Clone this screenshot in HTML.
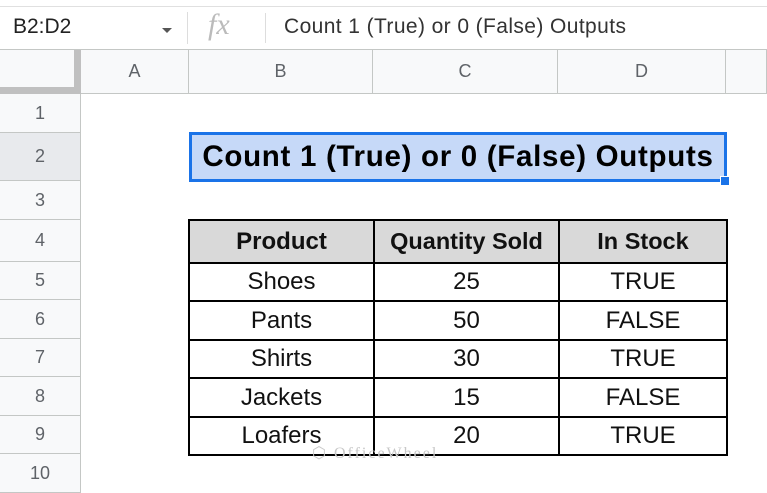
<!DOCTYPE html>
<html><head><style>
body{margin:0;width:767px;height:493px;overflow:hidden;background:#fff;font-family:"Liberation Sans",Arial,sans-serif;position:relative}
.a{position:absolute;box-sizing:border-box}
.rh{left:0;width:81px;background:#f8f9fa;border-bottom:1px solid #c4c7c5;border-right:1px solid #c4c7c5;text-align:center;color:#5f6368;font-size:18px;display:flex;align-items:center;justify-content:center}
.ch{top:50px;height:44px;background:#f8f9fa;border-right:1px solid #c4c7c5;border-bottom:1px solid #c4c7c5;color:#5f6368;font-size:18px;display:flex;align-items:center;justify-content:center}
.c{border-right:2px solid #000;border-bottom:2px solid #000;display:flex;align-items:center;justify-content:center;font-size:24px;color:#111}
.h{font-weight:bold;font-size:23.5px}
</style></head><body>
<div class="a" style="left:0;top:6px;width:767px;height:1px;background:#e0e0e0"></div>
<div class="a" style="left:0;top:7px;width:767px;height:43px;background:#fff;border-bottom:1px solid #c4c7c5"></div>
<div class="a" style="left:13px;top:15px;font-size:21px;color:#222">B2:D2</div>
<div class="a" style="left:162px;top:28px;width:0;height:0;border-left:5px solid transparent;border-right:5px solid transparent;border-top:5px solid #555"></div>
<div class="a" style="left:187px;top:12px;width:1px;height:32px;background:#ddd"></div>
<div class="a" style="left:208px;top:8px;font-size:30px;font-style:italic;color:#bbb;font-family:'Liberation Serif',serif">fx</div>
<div class="a" style="left:265px;top:13px;width:1px;height:30px;background:#ddd"></div>
<div class="a" style="left:284px;top:15px;font-size:21px;letter-spacing:0.4px;color:#333">Count 1 (True) or 0 (False) Outputs</div>

<div class="a" style="left:0;top:50px;width:81px;height:44px;background:#f8f9fa;border-right:7px solid #c0c0c0;border-bottom:7px solid #c0c0c0"></div>
<div class="a ch" style="left:81px;width:108px">A</div>
<div class="a ch" style="left:189px;width:184px">B</div>
<div class="a ch" style="left:373px;width:185px">C</div>
<div class="a ch" style="left:558px;width:168px">D</div>
<div class="a ch" style="left:726px;width:41px"></div>

<div class="a rh" style="top:94px;height:39px">1</div>
<div class="a rh" style="top:133px;height:48px;background:#e8eaed">2</div>
<div class="a rh" style="top:181px;height:39px">3</div>
<div class="a rh" style="top:220px;height:42px">4</div>
<div class="a rh" style="top:262px;height:38px">5</div>
<div class="a rh" style="top:300px;height:39px">6</div>
<div class="a rh" style="top:339px;height:38px">7</div>
<div class="a rh" style="top:377px;height:39px">8</div>
<div class="a rh" style="top:416px;height:38px">9</div>
<div class="a rh" style="top:454px;height:39px">10</div>

<div class="a" style="left:189px;top:132px;width:538px;height:50px;background:#c6d9f8;border:3px solid #1a73e8;display:flex;align-items:center;justify-content:center;font-size:29.5px;letter-spacing:0.7px;font-weight:bold;color:#000;white-space:nowrap">Count 1 (True) or 0 (False) Outputs</div>
<div class="a" style="left:720px;top:176px;width:10px;height:10px;background:#1a73e8;border:1px solid #fff"></div>

<div class="a" style="left:188px;top:219px;width:540px;height:237px;border-left:2px solid #000;border-top:2px solid #000"></div>
<div class="a c h" style="left:190px;top:221px;width:185px;height:43px;background:#d9d9d9;font-size:24px">Product</div>
<div class="a c h" style="left:375px;top:221px;width:185px;height:43px;background:#d9d9d9">Quantity Sold</div>
<div class="a c h" style="left:560px;top:221px;width:168px;height:43px;background:#d9d9d9">In Stock</div>

<div class="a c" style="left:190px;top:264px;width:185px;height:38px">Shoes</div>
<div class="a c" style="left:375px;top:264px;width:185px;height:38px">25</div>
<div class="a c" style="left:560px;top:264px;width:168px;height:38px">TRUE</div>
<div class="a c" style="left:190px;top:302px;width:185px;height:39px">Pants</div>
<div class="a c" style="left:375px;top:302px;width:185px;height:39px">50</div>
<div class="a c" style="left:560px;top:302px;width:168px;height:39px">FALSE</div>
<div class="a c" style="left:190px;top:341px;width:185px;height:38px">Shirts</div>
<div class="a c" style="left:375px;top:341px;width:185px;height:38px">30</div>
<div class="a c" style="left:560px;top:341px;width:168px;height:38px">TRUE</div>
<div class="a c" style="left:190px;top:379px;width:185px;height:39px">Jackets</div>
<div class="a c" style="left:375px;top:379px;width:185px;height:39px">15</div>
<div class="a c" style="left:560px;top:379px;width:168px;height:39px">FALSE</div>
<div class="a c" style="left:190px;top:418px;width:185px;height:38px">Loafers</div>
<div class="a c" style="left:375px;top:418px;width:185px;height:38px">20</div>
<div class="a c" style="left:560px;top:418px;width:168px;height:38px">TRUE</div>
<div class="a" style="left:312px;top:443px;font-size:16px;color:#c8c8c8;letter-spacing:2px;font-family:'Liberation Serif',serif">⬡ OfficeWheel</div>
</body></html>
